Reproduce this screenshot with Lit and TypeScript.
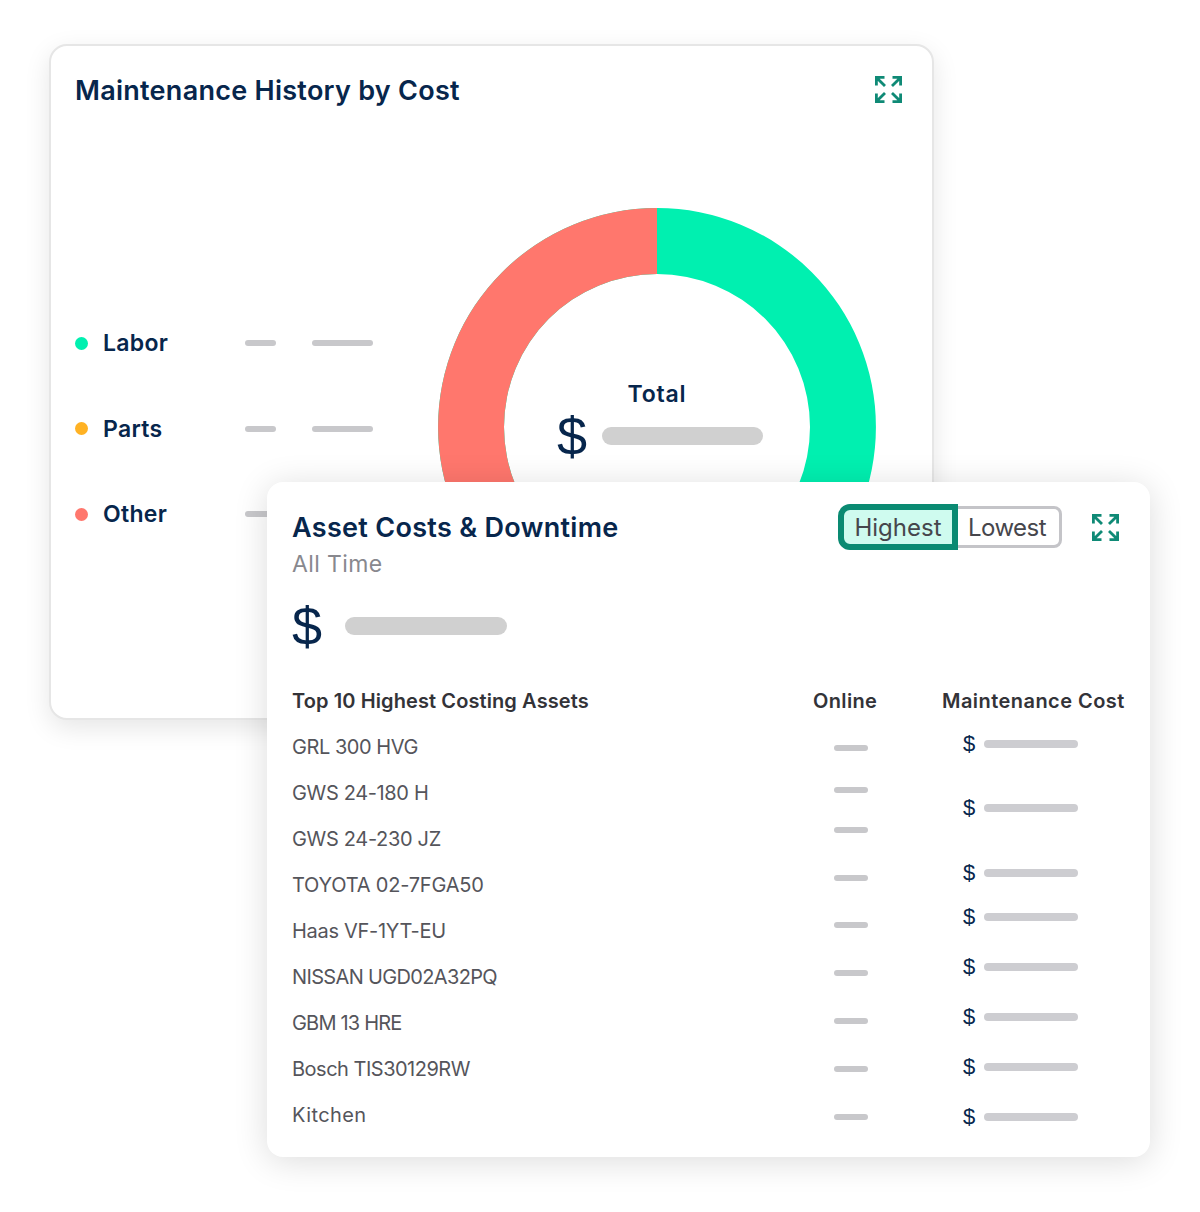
import { LitElement, html, css, svg } from "lit";
import { customElement } from "lit/decorators.js";

const expandIcon = html`<svg class="expand" viewBox="0 0 27 27" fill="none" stroke="#0f8a76" stroke-width="2.8">
  <path d="M1.4 9.5V1.4H9.5M1.4 1.4L10 10"/>
  <path d="M25.6 9.5V1.4H17.5M25.6 1.4L17 10"/>
  <path d="M1.4 17.5V25.6H9.5M1.4 25.6L10 17"/>
  <path d="M25.6 17.5V25.6H17.5M25.6 25.6L17 17"/>
</svg>`;

const legend = [
  { label: "Labor", color: "#00f0b0" },
  { label: "Parts", color: "#ffb224" },
  { label: "Other", color: "#ff776d" },
];

const names: [string, number][] = [
  ["GRL 300 HVG", -0.45],
  ["GWS 24-180 H", -0.36],
  ["GWS 24-230 JZ", -0.33],
  ["TOYOTA 02-7FGA50", -0.2],
  ["Haas VF-1YT-EU", -0.3],
  ["NISSAN UGD02A32PQ", -0.65],
  ["GBM 13 HRE", -0.8],
  ["Bosch TIS30129RW", -0.5],
  ["Kitchen", 0.4],
];
const onlineY = [747, 789, 829, 877, 924, 972, 1020, 1068, 1116];
const costY = [743, 807, 872, 916, 966, 1016, 1066, 1116];

@customElement("app-root")
export class AppRoot extends LitElement {
  static styles = css`
    :host { display: block; width: 1200px; height: 1212px; position: relative; background: #fff; font-family: "Inter", "Noto Sans", sans-serif; overflow: hidden; }
    .card { position: absolute; box-sizing: border-box; background: #fff; }
    .back { left: 49px; top: 44px; width: 885px; height: 676px; border-radius: 18px; border: 2px solid #e6e6e6; box-shadow: 0 8px 26px rgba(0,0,0,.1); padding: 27px 30px 0 24px; }
    .front { left: 267px; top: 482px; width: 883px; height: 675px; border-radius: 16px; box-shadow: 0 4px 34px rgba(0,0,0,.14); padding: 28px 31px 0 25px; }
    .head { display: flex; justify-content: space-between; align-items: flex-start; }
    h2 { margin: 0; font-weight: 600; color: #07264c; font-size: 27px; line-height: 36px; }
    .back h2 { letter-spacing: .27px; }
    .front h2 { letter-spacing: .31px; }
    .expand { width: 27px; height: 27px; display: block; flex: none; }
    .back .expand { margin-top: 3px; }
    .body { display: flex; margin-top: 99px; height: 500px; }
    .legend { width: 363px; display: flex; flex-direction: column; gap: 61px; margin-top: 123px; }
    .lrow { display: flex; align-items: center; height: 24.5px; color: #07264c; font-size: 23px; font-weight: 600; letter-spacing: .3px; }
    .dot { width: 13px; height: 13px; border-radius: 50%; margin-right: 15px; flex: none; }
    .lname { width: 142px; }
    .pill { height: 6px; border-radius: 3px; background: #c8c8cb; flex: none; }
    .donut { position: relative; width: 438px; height: 438px; flex: none; }
    .donut svg { display: block; width: 438px; height: 438px; }
    .total { position: absolute; left: 0; right: 0; top: 172px; text-align: center; color: #07264c; font-size: 23px; font-weight: 600; line-height: 28px; letter-spacing: .8px; }
    .amount { position: absolute; left: 119px; top: 198px; display: flex; align-items: center; }
    .amount .sign { font: 400 54px/60px "Liberation Sans", sans-serif; color: #07264c; width: 45px; }
    .bar { height: 18px; border-radius: 9px; background: #d0d0d0; width: 161px; }
    .tog { display: flex; align-items: center; margin-right: 30px; }
    .hi, .lo { box-sizing: border-box; display: flex; align-items: center; justify-content: center; font-size: 24px; color: #46464c; }
    .hi { width: 120px; height: 46px; border: 6px solid #0a8a72; background: #cffbef; border-radius: 12px 0 0 12px; }
    .lo { width: 104px; height: 42px; border: 3px solid #c4c4c8; border-left: none; border-radius: 0 8px 8px 0; letter-spacing: -.5px; padding-right: 3px; }
    .rightHead { display: flex; align-items: flex-start; margin-top: -6px; }
    .rightHead .expand { margin-top: 10px; }
    .sub { font-size: 23px; color: #88888e; line-height: 30px; margin-top: 3px; letter-spacing: .4px; }
    .sum { display: flex; align-items: center; margin-top: 17px; }
    .sum .sign { font: 400 54px/60px "Liberation Sans", sans-serif; color: #07264c; width: 53px; }
    .sum .bar { width: 162px; }
    .cols { display: grid; grid-template-columns: 521px 129px 1fr; position: absolute; left: 25px; right: 25px; top: 204px; }
    .th { font-size: 20px; font-weight: 600; color: #333338; line-height: 30px; white-space: nowrap; letter-spacing: .35px; }
    .th.first { letter-spacing: .1px; }
    .th.last { letter-spacing: .45px; }
    .name { font-size: 20px; color: #55555b; line-height: 30px; margin-top: 16px; white-space: nowrap; }
    .dash { width: 34px; height: 6px; border-radius: 3px; background: #c8c8cb; margin-left: 21px; }
    .costrow { display: flex; align-items: center; height: 24px; margin-left: 21px; }
    .costrow .s { font: 400 22px/24px "Liberation Sans", sans-serif; color: #07264c; width: 21px; }
    .costrow .b { width: 94px; height: 8px; border-radius: 4px; background: #cdcdd1; }
  `;

  render() {
    return html`
      <section class="card back">
        <div class="head"><h2>Maintenance History by Cost</h2>${expandIcon}</div>
        <div class="body">
          <div class="legend">
            ${legend.map((l) => html`<div class="lrow"><span class="dot" style="background:${l.color}"></span><span class="lname">${l.label}</span><span class="pill" style="width:31px;margin-right:36px"></span><span class="pill" style="width:61px"></span></div>`)}
          </div>
          <div class="donut">
            <svg viewBox="0 0 438 438">
              ${svg`<path d="M219 0A219 219 0 0 1 219 438A219 219 0 0 1 219 0ZM219 66A153 153 0 0 0 219 372A153 153 0 0 0 219 66Z" fill="#00f0b0" fill-rule="evenodd"/>`}
              ${svg`<path d="M219 0A219 219 0 0 0 219 438V372A153 153 0 0 1 219 66Z" fill="#ff776d"/>`}
            </svg>
            <div class="total">Total</div>
            <div class="amount"><span class="sign">$</span><span class="bar"></span></div>
          </div>
        </div>
      </section>
      <section class="card front">
        <div class="head">
          <div>
            <h2>Asset Costs &amp; Downtime</h2>
            <div class="sub">All Time</div>
            <div class="sum"><span class="sign">$</span><span class="bar"></span></div>
          </div>
          <div class="rightHead">
            <div class="tog"><div class="hi">Highest</div><div class="lo">Lowest</div></div>
            ${expandIcon}
          </div>
        </div>
        <div class="cols">
          <div>
            <div class="th first">Top 10 Highest Costing Assets</div>
            ${names.map(([n, ls]) => html`<div class="name" style="letter-spacing:${ls}px">${n}</div>`)}
          </div>
          <div>
            <div class="th">Online</div>
            ${onlineY.map((y, i) => html`<div class="dash" style="margin-top:${i === 0 ? 29 : y - onlineY[i - 1] - 6}px"></div>`)}
          </div>
          <div>
            <div class="th last">Maintenance Cost</div>
            ${costY.map((y, i) => html`<div class="costrow" style="margin-top:${i === 0 ? 16 : y - costY[i - 1] - 24}px"><span class="s">$</span><span class="b"></span></div>`)}
          </div>
        </div>
      </section>
    `;
  }
}
